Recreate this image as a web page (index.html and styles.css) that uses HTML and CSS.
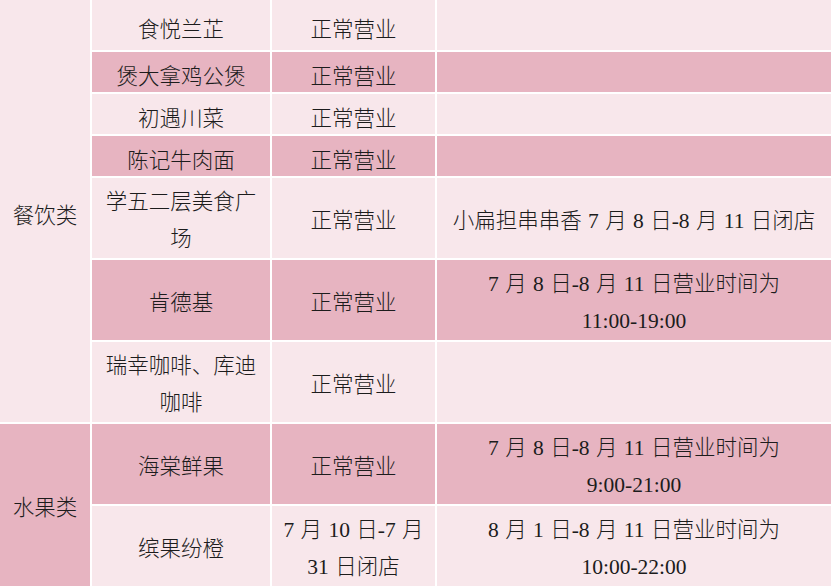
FILE: index.html
```html
<!DOCTYPE html>
<html lang="zh-CN">
<head>
<meta charset="utf-8">
<link rel="stylesheet" href="styles.css">
</head>
<body>
<table class="hours">
  <colgroup>
    <col class="c1"><col class="c2"><col class="c3"><col class="c4">
  </colgroup>
  <tbody>
    <tr class="light first">
      <td class="cat light" rowspan="7">餐饮类</td>
      <td>食悦兰芷</td><td>正常营业</td><td class="note"></td>
    </tr>
    <tr class="dark"><td>煲大拿鸡公煲</td><td>正常营业</td><td class="note"></td></tr>
    <tr class="light"><td>初遇川菜</td><td>正常营业</td><td class="note"></td></tr>
    <tr class="dark"><td>陈记牛肉面</td><td>正常营业</td><td class="note"></td></tr>
    <tr class="light two"><td>学五二层美食广场</td><td>正常营业</td><td class="note">小扁担串串香 7 月 8 日-8 月 11 日闭店</td></tr>
    <tr class="dark two"><td>肯德基</td><td>正常营业</td><td class="note">7 月 8 日-8 月 11 日营业时间为 <span class="time">11:00-19:00</span></td></tr>
    <tr class="light two"><td>瑞幸咖啡、库迪咖啡</td><td>正常营业</td><td class="note"></td></tr>
    <tr class="dark two">
      <td class="cat dark" rowspan="2">水果类</td>
      <td>海棠鲜果</td><td>正常营业</td><td class="note">7 月 8 日-8 月 11 日营业时间为 <span class="time">9:00-21:00</span></td>
    </tr>
    <tr class="light two"><td>缤果纷橙</td><td>7 月 10 日-7 月 31 日闭店</td><td class="note">8 月 1 日-8 月 11 日营业时间为 <span class="time">10:00-22:00</span></td></tr>
  </tbody>
</table>
</body>
</html>
```

FILE: styles.css
```css
html, body {
  margin: 0;
  padding: 0;
  background: #f8e7eb;
}

.hours {
  border-collapse: separate;
  border-spacing: 0;
  table-layout: fixed;
  width: 831px;
  font-family: "Liberation Serif", "Noto Sans CJK SC", serif;
  font-size: 21.5px;
  font-weight: 300;
  color: #1c1c1c;
  word-spacing: 1px;
}

.c1 { width: 92px; }
.c2 { width: 180px; }
.c3 { width: 165px; }
.c4 { width: 394px; }

.hours td {
  border-right: 2px solid #ffffff;
  border-bottom: 2px solid #ffffff;
  padding: 10px 5px 0;
  line-height: 30px;
  height: 30px;
  text-align: center;
  vertical-align: middle;
  overflow: hidden;
}

.hours td.note {
  padding-left: 10px;
  padding-right: 10px;
  border-right: 0;
}

.time {
  white-space: nowrap;
}

.hours tr.first td {
  padding-top: 15px;
  padding-bottom: 5px;
}

.hours tr.two td {
  padding-top: 6px;
  line-height: 37px;
  height: 74px;
}

.hours td.cat {
  padding-top: 10px;
  line-height: 36px;
  height: auto;
}

.light td { background: #f8e7eb; }
.dark td { background: #e7b4c1; }
.hours td.cat.light { background: #f8e7eb; }
.hours td.cat.dark { background: #e7b4c1; }
```
